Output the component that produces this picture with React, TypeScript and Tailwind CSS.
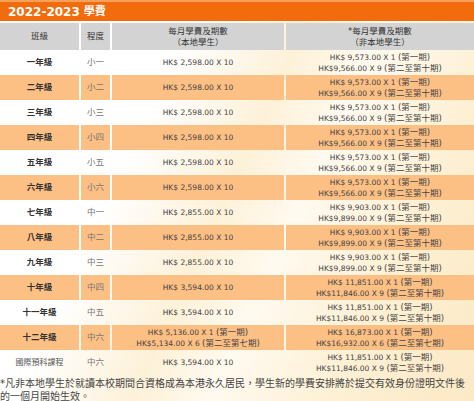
import React from "react";

const C = ({ children }: { children: React.ReactNode }) => (
  <span className="text-[8.5px]">{children}</span>
);

type Row = {
  g: string;
  l: string;
  local: React.ReactNode;
  non: [string, string, string, string];
};

const rows: Row[] = [
  { g: "一年級", l: "小一", local: "HK$ 2,598.00 X 10", non: ["HK$ 9,573.00 X 1 ", "(第一期)", "HK$9,566.00 X 9 ", "(第二至第十期)"] },
  { g: "二年級", l: "小二", local: "HK$ 2,598.00 X 10", non: ["HK$ 9,573.00 X 1 ", "(第一期)", "HK$9,566.00 X 9 ", "(第二至第十期)"] },
  { g: "三年級", l: "小三", local: "HK$ 2,598.00 X 10", non: ["HK$ 9,573.00 X 1 ", "(第一期)", "HK$9,566.00 X 9 ", "(第二至第十期)"] },
  { g: "四年級", l: "小四", local: "HK$ 2,598.00 X 10", non: ["HK$ 9,573.00 X 1 ", "(第一期)", "HK$9,566.00 X 9 ", "(第二至第十期)"] },
  { g: "五年級", l: "小五", local: "HK$ 2,598.00 X 10", non: ["HK$ 9,573.00 X 1 ", "(第一期)", "HK$9,566.00 X 9 ", "(第二至第十期)"] },
  { g: "六年級", l: "小六", local: "HK$ 2,598.00 X 10", non: ["HK$ 9,573.00 X 1 ", "(第一期)", "HK$9,566.00 X 9 ", "(第二至第十期)"] },
  { g: "七年級", l: "中一", local: "HK$ 2,855.00 X 10", non: ["HK$ 9,903.00 X 1 ", "(第一期)", "HK$9,899.00 X 9 ", "(第二至第十期)"] },
  { g: "八年級", l: "中二", local: "HK$ 2,855.00 X 10", non: ["HK$ 9,903.00 X 1 ", "(第一期)", "HK$9,899.00 X 9 ", "(第二至第十期)"] },
  { g: "九年級", l: "中三", local: "HK$ 2,855.00 X 10", non: ["HK$ 9,903.00 X 1 ", "(第一期)", "HK$9,899.00 X 9 ", "(第二至第十期)"] },
  { g: "十年級", l: "中四", local: "HK$ 3,594.00 X 10", non: ["HK$ 11,851.00 X 1 ", "(第一期)", "HK$11,846.00 X 9 ", "(第二至第十期)"] },
  { g: "十一年級", l: "中五", local: "HK$ 3,594.00 X 10", non: ["HK$ 11,851.00 X 1 ", "(第一期)", "HK$11,846.00 X 9 ", "(第二至第十期)"] },
  {
    g: "十二年級",
    l: "中六",
    local: (
      <div className="flex flex-col items-center leading-[11px]">
        <span>
          HK$ 5,136.00 X 1 <C>(第一期)</C>
        </span>
        <span>
          HK$5,134.00 X 6 <C>(第二至第七期)</C>
        </span>
      </div>
    ),
    non: ["HK$ 16,873.00 X 1 ", "(第一期)", "HK$16,932.00 X 6 ", "(第二至第七期)"],
  },
  { g: "國際預科課程", l: "中六", local: "HK$ 3,594.00 X 10", non: ["HK$ 11,851.00 X 1 ", "(第一期)", "HK$11,846.00 X 9 ", "(第二至第十期)"] },
];

export default function App() {
  return (
    <div
      className="w-[474px] h-[401px] overflow-hidden bg-[linear-gradient(115deg,#ffffff_0%,#ffffff_30%,#fdf1d8_48%,#fffaf0_60%,#fdf0d4_78%,#fce9c6_100%)]"
      style={{ fontFamily: '"DejaVu Sans", "Noto Sans CJK TC", sans-serif' }}
    >
      <div className="h-[21px] bg-[#f26b0c] border-t-[2px] border-[#f7a05a] flex items-center pl-[8px] text-white font-bold text-[12px] leading-none">
        2022-2023 <span className="ml-[4px] text-[11px]">學費</span>
      </div>
      <div className="mt-[2px] grid grid-cols-[79px_29px_172px_1fr] gap-x-[2px] text-[#444]">
        <div className="h-[27px] bg-[#d3d3d3] flex items-center justify-center text-[8.5px] text-[#333]">班級</div>
        <div className="h-[27px] bg-[#d3d3d3] flex items-center justify-center text-[8.5px] text-[#333]">程度</div>
        <div className="h-[27px] bg-[#d3d3d3] flex flex-col items-center justify-center text-[8.5px] leading-[11px] text-[#333]">
          <span>每月學費及期數</span>
          <span>（本地學生）</span>
        </div>
        <div className="h-[27px] bg-[#d3d3d3] flex flex-col items-center justify-center text-[8.5px] leading-[11px] text-[#333]">
          <span>*每月學費及期數</span>
          <span>（非本地學生）</span>
        </div>
        {rows.map((r, i) => {
          const bg = i % 2 === 1 ? "bg-[#fcbf84]" : "";
          const last = r.g === "國際預科課程";
          return (
            <React.Fragment key={i}>
              <div
                className={`h-[25px] ${bg} flex items-center justify-center ${
                  last ? "text-[8px] text-[#555]" : "text-[8.5px] font-bold text-[#333]"
                }`}
              >
                {r.g}
              </div>
              <div className={`h-[25px] ${bg} flex items-center justify-center text-[8.5px] text-[#777]`}>{r.l}</div>
              <div className={`h-[25px] ${bg} flex items-center justify-center text-[7.5px] text-[#444]`}>{r.local}</div>
              <div className={`h-[25px] ${bg} flex flex-col items-center justify-center text-[7.5px] text-[#444] leading-[11px]`}>
                <span>
                  {r.non[0]}
                  <C>{r.non[1]}</C>
                </span>
                <span>
                  {r.non[2]}
                  <C>{r.non[3]}</C>
                </span>
              </div>
            </React.Fragment>
          );
        })}
      </div>
      <div className="mt-[2px] text-[10px] leading-[13px] text-[#444]">
        <div>*凡非本地學生於就讀本校期間合資格成為本港永久居民，學生新的學費安排將於提交有效身份證明文件後</div>
        <div>的一個月開始生效。</div>
      </div>
    </div>
  );
}
